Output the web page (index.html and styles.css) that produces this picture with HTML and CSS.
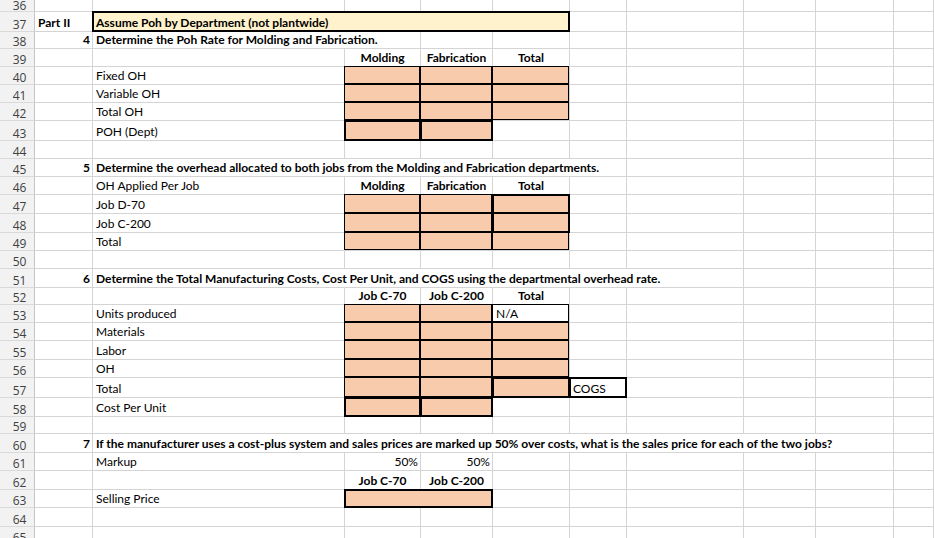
FILE: index.html
```html
<!DOCTYPE html>
<html>
<head>
<meta charset="utf-8">
<title>Sheet</title>
<link rel="stylesheet" href="styles.css">
</head>
<body>
<div class="sheet">
  <!-- 36 -->
  <div class="h first">36</div><div class="c"></div><div class="c"></div><div class="c"></div><div class="c"></div><div class="c"></div><div class="c"></div><div class="c"></div><div class="c"></div><div class="c"></div><div class="c"></div>
  <!-- 37 -->
  <div class="h">37</div><div class="c bold">Part II</div><div class="c s4 yellow bb bold">Assume Poh by Department (not plantwide)</div><div class="c"></div><div class="c"></div><div class="c"></div><div class="c"></div><div class="c"></div>
  <!-- 38 -->
  <div class="h">38</div><div class="c bold right">4</div><div class="c s2 bold">Determine the Poh Rate for Molding and Fabrication.</div><div class="c"></div><div class="c"></div><div class="c"></div><div class="c"></div><div class="c"></div><div class="c"></div><div class="c"></div>
  <!-- 39 -->
  <div class="h">39</div><div class="c"></div><div class="c"></div><div class="c bold center">Molding</div><div class="c bold center">Fabrication</div><div class="c bold center">Total</div><div class="c"></div><div class="c"></div><div class="c"></div><div class="c"></div><div class="c"></div>
  <!-- 40 -->
  <div class="h">40</div><div class="c"></div><div class="c">Fixed OH</div><div class="c fill b"></div><div class="c fill b"></div><div class="c fill b"></div><div class="c"></div><div class="c"></div><div class="c"></div><div class="c"></div><div class="c"></div>
  <!-- 41 -->
  <div class="h">41</div><div class="c"></div><div class="c">Variable OH</div><div class="c fill b"></div><div class="c fill b"></div><div class="c fill b"></div><div class="c"></div><div class="c"></div><div class="c"></div><div class="c"></div><div class="c"></div>
  <!-- 42 -->
  <div class="h">42</div><div class="c"></div><div class="c">Total OH</div><div class="c fill b"></div><div class="c fill b"></div><div class="c fill b"></div><div class="c"></div><div class="c"></div><div class="c"></div><div class="c"></div><div class="c"></div>
  <!-- 43 -->
  <div class="h">43</div><div class="c"></div><div class="c">POH (Dept)</div><div class="c fill bb"></div><div class="c fill bb"></div><div class="c"></div><div class="c"></div><div class="c"></div><div class="c"></div><div class="c"></div><div class="c"></div>
  <!-- 44 -->
  <div class="h">44</div><div class="c"></div><div class="c"></div><div class="c"></div><div class="c"></div><div class="c"></div><div class="c"></div><div class="c"></div><div class="c"></div><div class="c"></div><div class="c"></div>
  <!-- 45 -->
  <div class="h">45</div><div class="c bold right">5</div><div class="c s5 bold">Determine the overhead allocated to both jobs from the Molding and Fabrication departments.</div><div class="c"></div><div class="c"></div><div class="c"></div><div class="c"></div>
  <!-- 46 -->
  <div class="h">46</div><div class="c"></div><div class="c">OH Applied Per Job</div><div class="c bold center">Molding</div><div class="c bold center">Fabrication</div><div class="c bold center">Total</div><div class="c"></div><div class="c"></div><div class="c"></div><div class="c"></div><div class="c"></div>
  <!-- 47 -->
  <div class="h">47</div><div class="c"></div><div class="c">Job D-70</div><div class="c fill b"></div><div class="c fill b"></div><div class="c fill bbt"></div><div class="c"></div><div class="c"></div><div class="c"></div><div class="c"></div><div class="c"></div>
  <!-- 48 -->
  <div class="h">48</div><div class="c"></div><div class="c">Job C-200</div><div class="c fill b"></div><div class="c fill b"></div><div class="c fill bbb"></div><div class="c"></div><div class="c"></div><div class="c"></div><div class="c"></div><div class="c"></div>
  <!-- 49 -->
  <div class="h">49</div><div class="c"></div><div class="c">Total</div><div class="c fill b"></div><div class="c fill b"></div><div class="c fill b"></div><div class="c"></div><div class="c"></div><div class="c"></div><div class="c"></div><div class="c"></div>
  <!-- 50 -->
  <div class="h">50</div><div class="c"></div><div class="c"></div><div class="c"></div><div class="c"></div><div class="c"></div><div class="c"></div><div class="c"></div><div class="c"></div><div class="c"></div><div class="c"></div>
  <!-- 51 -->
  <div class="h">51</div><div class="c bold right">6</div><div class="c s6 bold">Determine the Total Manufacturing Costs, Cost Per Unit, and COGS using the departmental overhead rate.</div><div class="c"></div><div class="c"></div><div class="c"></div>
  <!-- 52 -->
  <div class="h">52</div><div class="c"></div><div class="c"></div><div class="c bold center">Job C-70</div><div class="c bold center">Job C-200</div><div class="c bold center">Total</div><div class="c"></div><div class="c"></div><div class="c"></div><div class="c"></div><div class="c"></div>
  <!-- 53 -->
  <div class="h">53</div><div class="c"></div><div class="c">Units produced</div><div class="c fill b"></div><div class="c fill b"></div><div class="c b">N/A</div><div class="c"></div><div class="c"></div><div class="c"></div><div class="c"></div><div class="c"></div>
  <!-- 54 -->
  <div class="h">54</div><div class="c"></div><div class="c">Materials</div><div class="c fill b"></div><div class="c fill b"></div><div class="c fill b"></div><div class="c"></div><div class="c"></div><div class="c"></div><div class="c"></div><div class="c"></div>
  <!-- 55 -->
  <div class="h">55</div><div class="c"></div><div class="c">Labor</div><div class="c fill b"></div><div class="c fill b"></div><div class="c fill b"></div><div class="c"></div><div class="c"></div><div class="c"></div><div class="c"></div><div class="c"></div>
  <!-- 56 -->
  <div class="h">56</div><div class="c"></div><div class="c">OH</div><div class="c fill b"></div><div class="c fill b"></div><div class="c fill b"></div><div class="c"></div><div class="c"></div><div class="c"></div><div class="c"></div><div class="c"></div>
  <!-- 57 -->
  <div class="h">57</div><div class="c"></div><div class="c">Total</div><div class="c fill b"></div><div class="c fill b"></div><div class="c fill bb"></div><div class="c bb">COGS</div><div class="c"></div><div class="c"></div><div class="c"></div><div class="c"></div>
  <!-- 58 -->
  <div class="h">58</div><div class="c"></div><div class="c">Cost Per Unit</div><div class="c fill bb"></div><div class="c fill bb"></div><div class="c"></div><div class="c"></div><div class="c"></div><div class="c"></div><div class="c"></div><div class="c"></div>
  <!-- 59 -->
  <div class="h">59</div><div class="c"></div><div class="c"></div><div class="c"></div><div class="c"></div><div class="c"></div><div class="c"></div><div class="c"></div><div class="c"></div><div class="c"></div><div class="c"></div>
  <!-- 60 -->
  <div class="h">60</div><div class="c bold right">7</div><div class="c s8 bold">If the manufacturer uses a cost-plus system and sales prices are marked up 50% over costs, what is the sales price for each of the two jobs?</div><div class="c"></div>
  <!-- 61 -->
  <div class="h">61</div><div class="c"></div><div class="c">Markup</div><div class="c right">50%</div><div class="c right">50%</div><div class="c"></div><div class="c"></div><div class="c"></div><div class="c"></div><div class="c"></div><div class="c"></div>
  <!-- 62 -->
  <div class="h">62</div><div class="c"></div><div class="c"></div><div class="c bold center">Job C-70</div><div class="c bold center">Job C-200</div><div class="c"></div><div class="c"></div><div class="c"></div><div class="c"></div><div class="c"></div><div class="c"></div>
  <!-- 63 -->
  <div class="h">63</div><div class="c"></div><div class="c">Selling Price</div><div class="c s2 fill bb"></div><div class="c"></div><div class="c"></div><div class="c"></div><div class="c"></div><div class="c"></div><div class="c"></div>
  <!-- 64 -->
  <div class="h">64</div><div class="c"></div><div class="c"></div><div class="c"></div><div class="c"></div><div class="c"></div><div class="c"></div><div class="c"></div><div class="c"></div><div class="c"></div><div class="c"></div>
  <!-- 65 -->
  <div class="h">65</div><div class="c"></div><div class="c"></div><div class="c"></div><div class="c"></div><div class="c"></div><div class="c"></div><div class="c"></div><div class="c"></div><div class="c"></div><div class="c"></div>
</div>
</body>
</html>
```
FILE: styles.css
```css
html, body {
  margin: 0;
  padding: 0;
  background: #ffffff;
  overflow: hidden;
}

.sheet {
  display: grid;
  grid-template-columns: 35px 58px 252px 76px 72px 77px 57px 117px 72px 78px 40px;
  grid-template-rows: 12px 20px 17px 18px 18px 18px 18px 20px 18px 18px 18px 19px 19px 18px 18px 19px 17px 18px 18px 19px 18px 20px 19px 17px 19px 18px 19px 18px 19px 18px;
  width: 934px;
  height: 538px;
  overflow: hidden;
  font-family: Lato, "Liberation Sans", sans-serif;
  color: #000;
}

.c, .h {
  position: relative;
  box-sizing: border-box;
  border-right: 1px solid #d4d4d4;
  border-bottom: 1px solid #d4d4d4;
  display: flex;
  align-items: flex-end;
  padding: 0 3px 1px 3px;
  white-space: nowrap;
  font-size: 12px;
  line-height: 14px;
  min-width: 0;
}

.h {
  background: #f2f2f2;
  color: #3f3f3f;
  justify-content: center;
  padding-left: 5px;
  padding-right: 0;
  border-right: 1px solid #c6c6c6;
  border-bottom: 1px solid #d9d9d9;
  font-family: "Open Sans", "Liberation Sans", sans-serif;
  font-size: 12px;
  line-height: 11px;
  overflow: hidden;
}

.h.first {
  padding-bottom: 0;
}

.bold { font-weight: 700; }
.right { justify-content: flex-end; padding-right: 2px; }
.center { justify-content: center; }

.s2 { grid-column: span 2; }
.s4 { grid-column: span 4; }
.s5 { grid-column: span 5; }
.s6 { grid-column: span 6; }
.s8 { grid-column: span 8; }

.fill { background: #f8cbad; }
.yellow { background: #fff2cc; }

.b::after,
.bb::after,
.bbt::after,
.bbb::after {
  content: "";
  position: absolute;
  pointer-events: none;
  border: 0 solid #000;
}

.b::after {
  left: -1px; top: -1px; right: 0; bottom: 0;
  border-width: 1px;
}

.bb::after {
  left: -1px; top: -1px; right: -1px; bottom: -1px;
  border-width: 2px;
}

.bbt::after {
  left: -1px; top: -1px; right: -1px; bottom: 0;
  border-width: 2px 2px 1px 2px;
}

.bbb::after {
  left: -1px; top: -1px; right: -1px; bottom: -1px;
  border-width: 1px 2px 2px 2px;
}
```
